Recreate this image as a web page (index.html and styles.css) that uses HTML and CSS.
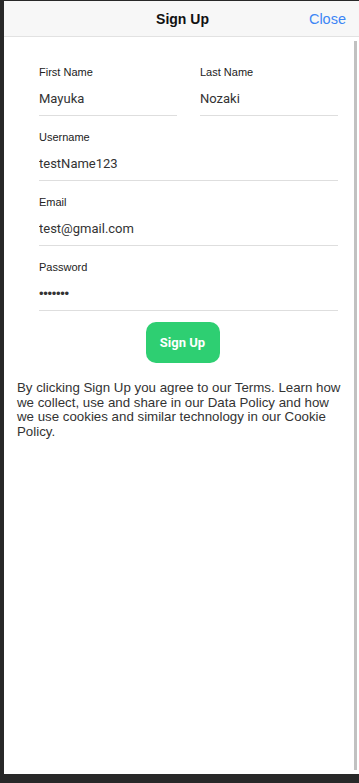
FILE: index.html
```html
<!DOCTYPE html>
<html lang="en">
<head>
<meta charset="UTF-8">
<meta name="viewport" content="width=device-width, initial-scale=1.0">
<link rel="stylesheet" href="styles.css">
<title>Sign Up</title>
</head>
<body>
<div class="screen">
  <div class="header">
    <span class="header-side"></span>
    <h1 class="header-title">Sign Up</h1>
    <a class="header-close" href="#">Close</a>
  </div>

  <div class="page">
    <div class="content">
      <form class="signup-form">
        <div class="fields">
          <div class="row">
            <div class="field">
              <label for="firstName">First Name</label>
              <input type="text" id="firstName" value="Mayuka">
            </div>
            <div class="field">
              <label for="lastName">Last Name</label>
              <input type="text" id="lastName" value="Nozaki">
            </div>
          </div>

          <div class="field">
            <label for="username">Username</label>
            <input type="text" id="username" value="testName123">
          </div>

          <div class="field">
            <label for="email">Email</label>
            <input type="email" id="email" value="test@gmail.com">
          </div>

          <div class="field">
            <label for="password">Password</label>
            <input type="password" id="password" value="1234567" class="password">
          </div>
        </div>

        <div class="actions">
          <button type="button" class="signup-btn">Sign Up</button>
        </div>
      </form>

      <p class="terms">By clicking Sign Up you agree to our Terms. Learn how we collect, use and share in our Data Policy and how we use cookies and similar technology in our Cookie Policy.</p>
    </div>
    <div class="scrollbar"></div>
  </div>
</div>
</body>
</html>
```

FILE: styles.css
```css
body {
  margin: 0;
  background-color: #282828;
  font-family: "Liberation Sans", Arial, sans-serif;
}

.screen {
  margin: 1px 0 0 4px;
  width: 355px;
  height: 773px;
  background: #fff;
  display: flex;
  flex-direction: column;
}

.header {
  height: 35px;
  background: #f7f7f7;
  border-bottom: 1px solid #e2e2e2;
  display: flex;
  align-items: center;
  padding: 0 13px 0 0;
}

.header-side {
  width: 40px;
}

.header-title {
  flex: 1;
  margin: 0;
  text-align: center;
  font-size: 14px;
  font-weight: bold;
  color: #111;
  padding-left: 15px;
}

.header-close {
  width: 40px;
  text-align: right;
  color: #3d86f5;
  text-decoration: none;
  font-size: 14.5px;
}

.page {
  flex: 1;
  display: flex;
}

.content {
  flex: 1;
}

.scrollbar {
  width: 3px;
  margin: 4px 2px 4px 0;
  background: #c1c1c1;
}

.signup-form {
  padding-top: 29px;
}

.fields {
  padding: 0 16px 0 35px;
}

.row {
  display: grid;
  grid-template-columns: 1fr 1fr;
  gap: 23px;
}

.field {
  display: flex;
  flex-direction: column;
  margin-bottom: 15px;
}

.field label {
  font-size: 11px;
  line-height: 13px;
  color: #222;
  margin-bottom: 12px;
}

.field input {
  border: none;
  border-bottom: 1px solid #dedede;
  padding: 0 0 8px 0;
  margin: 0;
  font-family: Roboto, "Liberation Sans", sans-serif;
  font-size: 13px;
  line-height: 16px;
  height: 16px;
  color: #333;
  outline: none;
  width: 100%;
  box-sizing: content-box;
}

.field input.password {
  font-family: "Liberation Sans", Arial, sans-serif;
  font-size: 13px;
  letter-spacing: -0.3px;
}

.actions {
  display: flex;
  justify-content: center;
  margin-top: -4px;
  padding-left: 7px;
}

.signup-btn {
  width: 74px;
  height: 41px;
  border: none;
  border-radius: 10px;
  background: #2ecf72;
  color: #fff;
  font-family: Roboto, "Liberation Sans", sans-serif;
  font-weight: bold;
  font-size: 13px;
  padding: 0;
}

.terms {
  margin: 18px 0 0 0;
  padding: 0 10px 0 13px;
  font-size: 13.3px;
  line-height: 14.5px;
  color: #333;
}
```
